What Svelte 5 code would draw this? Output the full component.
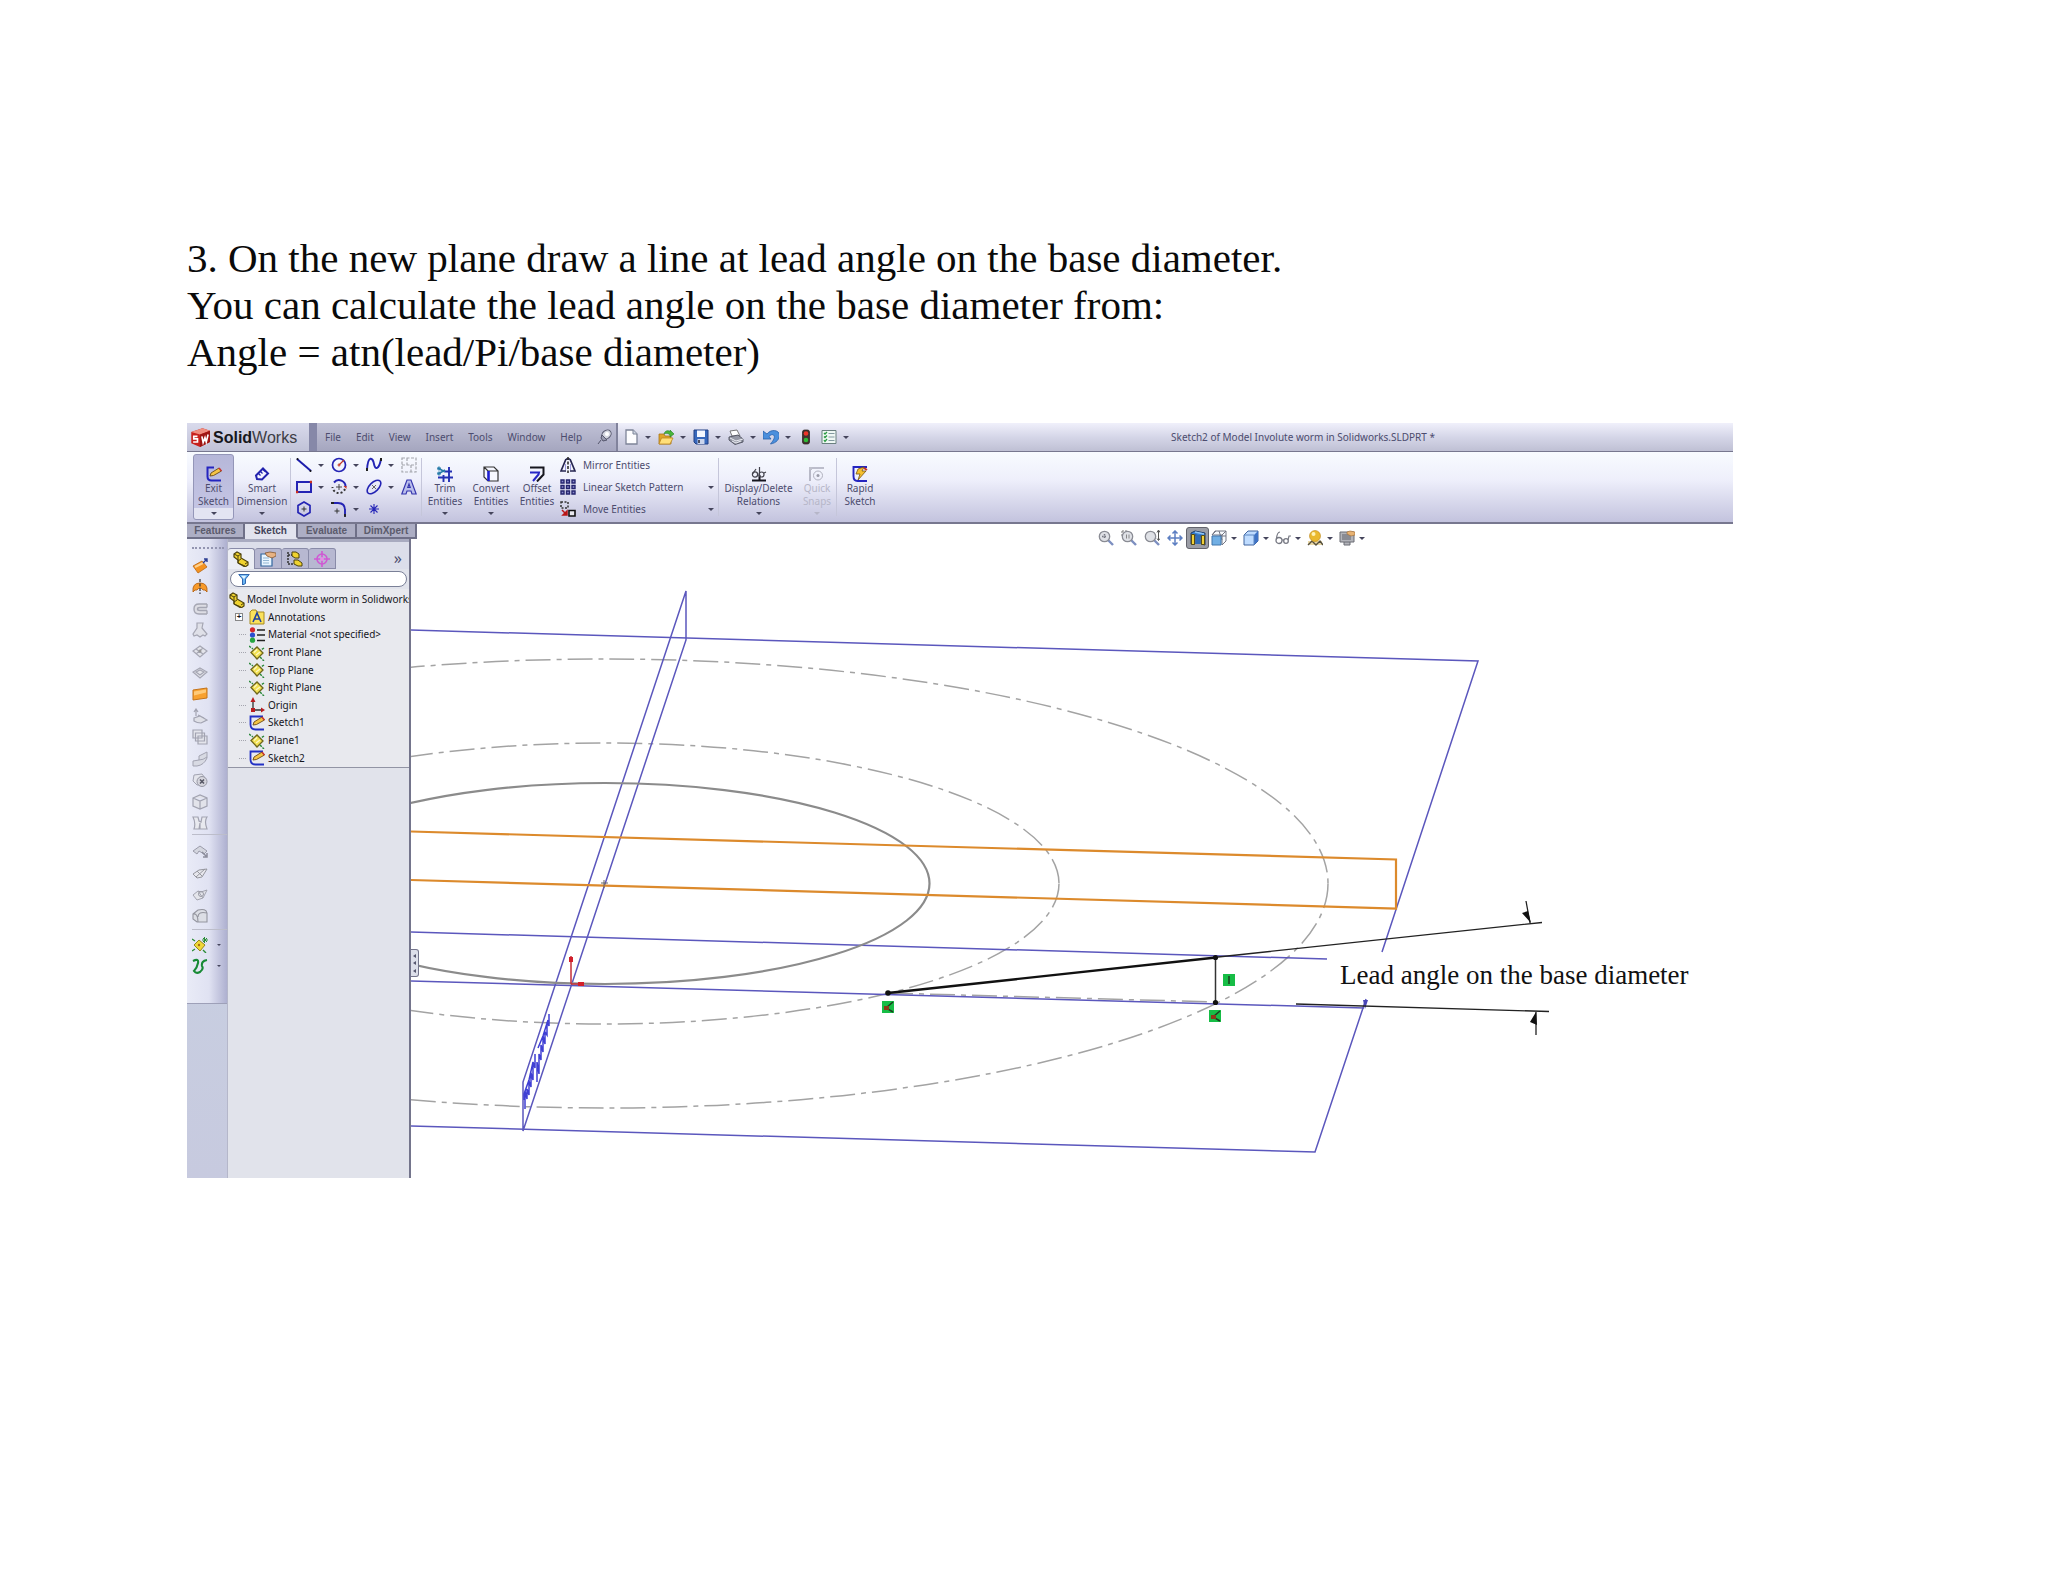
<script>
    // Instruction text above the window
    const steps = [
        '3. On the new plane draw a line at lead angle on the base diameter.',
        'You can calculate the lead angle on the base diameter from:',
        'Angle = atn(lead/Pi/base diameter)',
    ];

    const menus = ['File', 'Edit', 'View', 'Insert', 'Tools', 'Window', 'Help'];

    const quickTools = [
        { icon: 'new', label: 'New', arrow: true },
        { icon: 'open', label: 'Open', arrow: true },
        { icon: 'save', label: 'Save', arrow: true },
        { icon: 'print', label: 'Print', arrow: true },
        { icon: 'undo', label: 'Undo', arrow: true },
        { icon: 'light', label: 'Rebuild', arrow: false },
        { icon: 'options', label: 'Options', arrow: true },
    ];

    const sketchTools = [
        { icon: 'line', label: 'Line', arrow: true },
        { icon: 'circle', label: 'Circle', arrow: true },
        { icon: 'spline', label: 'Spline', arrow: true },
        { icon: 'gridOff', label: 'Plane' },
        { icon: 'rect', label: 'Rectangle', arrow: true },
        { icon: 'arc', label: 'Arc', arrow: true },
        { icon: 'ellipse', label: 'Ellipse', arrow: true },
        { icon: 'text', label: 'Text' },
        { icon: 'polygon', label: 'Polygon' },
        { icon: 'fillet', label: 'Fillet', arrow: true },
        { icon: 'point', label: 'Point' },
    ];

    const entityTools = [
        { icon: 'mirror', label: 'Mirror Entities' },
        { icon: 'pattern', label: 'Linear Sketch Pattern', arrow: true },
        { icon: 'move', label: 'Move Entities', arrow: true },
    ];

    const tabs = ['Features', 'Sketch', 'Evaluate', 'DimXpert'];
    let activeTab = $state('Sketch');

    const surfaceTools = ['extrude', 'revolve', 'sweep', 'loft', 'boundary', 'surface', 'planar', 'offsetS', 'copy', 'ruled', 'deleteF', 'cube', 'knit'];
    const trimTools = ['extend', 'trimS', 'untrim', 'filletS'];

    const panelTabs = ['part', 'property', 'config', 'target'];

    const tree = [
        { icon: 'note', label: 'Annotations', plus: true },
        { icon: 'material', label: 'Material <not specified>' },
        { icon: 'plane', label: 'Front Plane' },
        { icon: 'plane', label: 'Top Plane' },
        { icon: 'plane', label: 'Right Plane' },
        { icon: 'origin', label: 'Origin' },
        { icon: 'sketch', label: 'Sketch1' },
        { icon: 'plane', label: 'Plane1' },
        { icon: 'sketch', label: 'Sketch2' },
    ];

    const viewTools = [
        { icon: 'zoomFit', label: 'Zoom to Fit' },
        { icon: 'zoomArea', label: 'Zoom to Area' },
        { icon: 'zoomInOut', label: 'Zoom In/Out' },
        { icon: 'pan', label: 'Pan' },
        { icon: 'section', label: 'Section View', active: true },
        { icon: 'orient', label: 'View Orientation', arrow: true },
        { icon: 'display', label: 'Display Style', arrow: true },
        { icon: 'glasses', label: 'Hide/Show Items', arrow: true },
        { icon: 'scene', label: 'Apply Scene', arrow: true },
        { icon: 'settings', label: 'View Settings', arrow: true },
    ];

    // All icons are drawn on a 16x16 grid
    const lens = '<path d="M10 10l5 5" stroke="#7d8fc0" stroke-width="2.4"/><circle cx="6.5" cy="6.5" r="5.2" fill="#dfe1e6" stroke="#8a8c94" stroke-width="1.3"/>';
    const pencil = '<path d="M4 10l1-3 8-5 2.500 3-8 4.500z" fill="#f4c445" stroke="#6b4a12" stroke-width=".9"/><path d="M13 2l2.500 3" stroke="#c33" stroke-width="1.500"/>';
    const icons = {
        logo: '<path d="M1 4l9-3 6 2v9l-8 4-7-3z" fill="#c8201c"/><path d="M1 4l9-3 6 2-8 3z" fill="#ef8e80"/><path d="M8 6l8-3v9l-8 4z" fill="#9e1512"/><path d="M6 7.500H3v2h3v2.500H2.500M9.500 7.500l1 5 1.500-4 1 3.500 1.500-6" stroke="#fff" stroke-width="1.300"/>',
        pin: '<ellipse cx="9.500" cy="5.500" rx="5" ry="4" transform="rotate(-40 9.500 5.500)" fill="#d4d6e0" stroke="#55566c"/><path d="M5 6l5 5-4 1-2-3zM4 11l-3 4" fill="#999bb0" stroke="#55566c"/><circle cx="10" cy="5" r="2" fill="#fff"/>',
        new: '<path d="M3 1h7l4 4v10H3z" fill="#fdfdff" stroke="#7d8498" stroke-width="1.300"/><path d="M10 1v4h4" fill="#cfd6e4" stroke="#7d8498"/>',
        open: '<path d="M1 5h5l1 2h6v8H1z" fill="#e0a428" stroke="#a8761a" stroke-width=".8"/><path d="M3.500 9H15l-3 6H1z" fill="#ffdf79" stroke="#b98420" stroke-width=".8"/><path d="M6 5c1-4 5-4 6-2V1l4 4-4 3V6c-2-2-4-2-6-1z" fill="#49b53a" stroke="#26802a" stroke-width=".6"/>',
        save: '<path d="M1 1h14v14H3l-2-2z" fill="#3768bc" stroke="#203f84"/><path d="M4 1.500h8V8H4z" fill="#f4f7ff"/><path d="M4.500 10h7v5h-7z" fill="#cbd5ec"/><path d="M6 11v3" stroke="#223" stroke-width="1.500"/>',
        print: '<path d="M4 7l-2-5 7-1 3 6z" fill="#fff" stroke="#777"/><path d="M1 8l9-2 5 4v3l-8 2.500L1 11z" fill="#9598a5" stroke="#4c4e5c" stroke-width=".9"/><path d="M2 9l6 3 7-2M4 12l4 2 5-2" stroke="#eceef4"/>',
        undo: '<path d="M0 2v8h8L6 7.500C9 4 12.500 6 11 9.500c-.6 2-2 3.500-3.500 5.500 6-1 9-5 9-9C16 .5 7.500 0 4 5z" fill="#4a8fdd" stroke="#2660aa" stroke-width=".8"/>',
        light: '<rect x="4.500" y="1" width="7" height="14" rx="2" fill="#42322e" stroke="#271d1b" stroke-width=".7"/><circle cx="8" cy="4.500" r="2.300" fill="#ee3529"/><circle cx="8" cy="11" r="2.300" fill="#2dbb35"/>',
        options: '<path d="M1 1.500h14v13H1z" fill="#eff8f4" stroke="#69807e"/><path d="M7.500 4.500h6M7.500 8h6M7.500 11.500h6" stroke="#8299a0"/><path d="M3 4l1 1 2-2M3 7.500l1 1 2-2M3 11l1 1.500L6 10" stroke="#2b9b42" stroke-width="1.300"/>',
        exit: '<path d="M8 1.500H1.500v9q0 4 4 4H15" stroke="#2424c0" stroke-width="2"/>' + pencil,
        dimension: '<path d="M2 9.500l7-7 5 5-6 6-5-.5z" fill="#f4f4ff" stroke="#2222ae" stroke-width="2"/><path d="M4.500 7.500l2 2M6.500 5.500l2 2M9 3.500l2 2" stroke="#2222ae" stroke-width="1.200"/>',
        line: '<path d="M1 2l14 12" stroke="#1c1cac" stroke-width="2"/><circle cx="1.500" cy="2" r="1" fill="#111"/><circle cx="14.500" cy="14" r="1" fill="#111"/>',
        circle: '<circle cx="8" cy="8" r="6.500" stroke="#2424b4" stroke-width="1.700"/><path d="M8 8l5-5M6.500 8h3M8 6.500v3" stroke="#c33a28" stroke-width="1.200"/>',
        spline: '<path d="M1 13c1-16 6-12 7-6s5 6 7-5" stroke="#2424b4" stroke-width="1.900"/><path d="M1 11v3M15 1v3" stroke="#222" stroke-width="2"/>',
        gridOff: '<path d="M1 1h14v14H1zM1 8h14M6 1v7M10 8v7" stroke="#a3a5ac" stroke-width="1.200" stroke-dasharray="3 1.500"/>',
        rect: '<path d="M1 3h14v10H1z" stroke="#2424b4" stroke-width="2"/><path d="M0 12h2v2H0zM14 2h2v2h-2z" fill="#c32" stroke="#c32" stroke-width=".5"/>',
        arc: '<path d="M3 3.500A6.500 6.500 0 0 1 14.500 8" stroke="#2424b4" stroke-width="2"/><path d="M14 10A6.500 6.500 0 0 1 1.500 8" stroke="#333" stroke-width="2" stroke-dasharray="2 2"/><path d="M8 5v6M5 8h6" stroke="#444"/><path d="M12.500 7h3v3z" fill="#c32"/>',
        ellipse: '<ellipse cx="8" cy="8" rx="8.500" ry="4.500" transform="rotate(-45 8 8)" stroke="#2424b4" stroke-width="1.600"/><path d="M6 6l4 4M10 6l-4 4" stroke="#666"/>',
        text: '<path d="M.8 15L6 1h4l5.200 14h-4.200l-1-3H6l-1 3zM6.800 8.500h2.400L8 5z" fill="#b9bdec" stroke="#3535ad" stroke-width="1.200"/>',
        polygon: '<path d="M8 1l6 3.500v7L8 15l-6-3.500v-7z" stroke="#2424b4" stroke-width="1.700"/><path d="M8 5.500v5M5.500 8h5" stroke="#333"/>',
        fillet: '<path d="M1 2h6q7 0 7 7v6" stroke="#2424b4" stroke-width="1.900"/><path d="M6 7.500v5M3.500 10h5" stroke="#333"/><path d="M0 2h3M14 13v3" stroke="#222" stroke-width="1.800"/>',
        point: '<path d="M8 3v10M3 8h10M4.500 4.500l7 7M11.500 4.500l-7 7" stroke="#2626b8" stroke-width="1.100"/>',
        trim: '<path d="M1 11.500h15M12 1v15M6.500 9v7M8 5.500h7" stroke="#2430b4" stroke-width="1.900"/><path d="M1 2l7 4M1 8l7-4" stroke="#257ba8" stroke-width="1.600"/><circle cx="2" cy="2.500" r="1.500" stroke="#257ba8"/><circle cx="2" cy="7.500" r="1.500" stroke="#257ba8"/>',
        convert: '<path d="M1 1h10l4 4v10H5l-4-4zM1 1l4 4h10" fill="#f7f8ff" stroke="#333" stroke-width="1.200"/><path d="M5.500 5v10" stroke="#1d1dd0" stroke-width="2.600"/>',
        offset: '<path d="M1 1.500h13.500v7L8 15.500" stroke="#16161e" stroke-width="2"/><path d="M1 6.500h9l-.5 2L4 15" stroke="#2525c5" stroke-width="2"/>',
        mirror: '<path d="M6 2L1 14h5M10 2l5 12h-5M6 2h4" stroke="#252550" stroke-width="1.700"/><path d="M5.500 7v6M10.500 7v6" stroke="#9a9ae0"/><path d="M8 0v16" stroke="#222" stroke-width="1.500" stroke-dasharray="3 1.500"/>',
        pattern: '<path d="M1 1h3v3H1zM6.500 1h3v3h-3zM12 1h3v3h-3zM1 6.500h3v3H1zM6.500 6.500h3v3h-3zM12 6.500h3v3h-3zM1 12h3v3H1zM6.500 12h3v3h-3zM12 12h3v3h-3z" fill="#8a8ace" stroke="#25256e" stroke-width="1.400"/>',
        move: '<path d="M1 1h7v6H1z" stroke="#333" stroke-width="1.500" stroke-dasharray="2 1.500"/><path d="M2 9l4 4M7 10v4H3z" fill="#b91616" stroke="#b91616" stroke-width="1.500"/><path d="M9 9.500h6V15H9z" fill="#e8e8ee" stroke="#111" stroke-width="1.600"/>',
        relations: '<path d="M1 14.500h14M8.500 9v5" stroke="#15151e" stroke-width="2"/><circle cx="4" cy="8.500" r="2.600" stroke="#42424c" stroke-width="1.200"/><circle cx="10.500" cy="8.500" r="2.500" stroke="#42424c" stroke-width="1.200"/><path d="M1.500 8L5 3M8.500 1v9M13 7l2-1" stroke="#42424c" stroke-width="1.200"/>',
        snaps: '<path d="M1 15V2h14" stroke="#aaabba" stroke-width="1.600"/><circle cx="9" cy="9.500" r="4.500" stroke="#b0b1be"/><circle cx="9" cy="9.500" r="1.500" fill="#9a9ba8"/><path d="M0 1h3v3H0z" fill="#c0c1cc"/>',
        rapid: '<path d="M15 1H1.500v9q0 5 4 5H15" stroke="#2424c0" stroke-width="1.900"/><path d="M6 3l6-2-2 4h4L6 14l2-6H4z" fill="#f5bf2c" stroke="#755317" stroke-width=".8"/><path d="M12 2l3 2" stroke="#c32" stroke-width="2"/>',
        extrude: '<path d="M1 8l9-5 5 6-9 6z" fill="#f4921f" stroke="#b96613" stroke-width=".8"/><path d="M3 9l8-4" stroke="#ffd28f" stroke-width="2"/><path d="M11 5l4-4M12 1h3v3" stroke="#2c3e93" stroke-width="1.400"/>',
        revolve: '<path d="M1 13Q0 4 8 4t7 9q-2-3-4-2-1-2-3-2t-3 2q-2-1-4 2z" fill="#f79a2a" stroke="#b7610e" stroke-width=".9"/><path d="M8 0v15" stroke="#333" stroke-dasharray="3 1.500" stroke-width="1.200"/>',
        sweep: '<path d="M15 3H7Q2 3 2 8t5 5h8M15 6.500H8q-2.500 0-2.500 1.500T8 9.500h7M15 3v3.500M15 9.500V13" fill="#dddde4" stroke="#a5a6b3" stroke-width="1.400"/>',
        loft: '<path d="M5 1h6l-1 5 5 6-2 2-2-1-3 2-3-2-3 1-1-2 4-6z" fill="#dfe0e8" stroke="#a5a6b3" stroke-width="1.200"/>',
        boundary: '<path d="M8 2l7 5-7 6-7-6zM4 5l7 5M11 4L4 10" fill="#e3e4ea" stroke="#a5a6b3" stroke-width="1.200"/><circle cx="8" cy="7" r="1.500" fill="#999"/>',
        surface: '<path d="M8 3l7 4-7 6-7-6zM4 7l4-2 4 2-4 3z" fill="#e3e4ea" stroke="#a5a6b3" stroke-width="1.200"/>',
        planar: '<path d="M1 4l14-2v10L1 14z" fill="#f8a12f" stroke="#c4741b"/><path d="M2 5.500l12-2v3l-12 3z" fill="#ffca78"/>',
        offsetS: '<path d="M2 10l6-2 7 4-6 3q-4 0-7-2zM4 8V2M2 4l2-3 2 3M6 7l6 3" fill="#dfe0e7" stroke="#a2a3b1" stroke-width="1.200"/>',
        copy: '<path d="M1 1h9v8H1zM3.500 4h9v8h-9zM6 7h9v8H6z" fill="#e4e5ec" stroke="#a2a3b1" stroke-width="1.200"/>',
        ruled: '<path d="M15 1v6q-3 7-10 8H1v-5l6-1V5l8-4zM7 9q4 0 8-3" fill="#d8dae3" stroke="#a2a3b1"/>',
        deleteF: '<path d="M2 3l8-1 3 4-3 7H5L1 9z" fill="#e4e5ec" stroke="#a2a3b1"/><circle cx="10" cy="9.500" r="5" fill="#d5d5dd" stroke="#9697a4"/><path d="M8 7.500l4 4M12 7.500l-4 4" stroke="#565765" stroke-width="1.600"/>',
        cube: '<path d="M1 4l7-3 7 3v8l-7 3-7-3zM1 4l7 3 7-3M8 7v8" fill="#e2e3ea" stroke="#a2a3b1" stroke-width="1.200"/>',
        knit: '<path d="M1 2h5l1 4 2 1 1-5h5q-3 4 0 12H8V8l-1 6H2q2-6-1-12z" fill="#e8e9ef" stroke="#a2a3b1" stroke-width="1.200"/>',
        extend: '<path d="M1 8l7-5 7 5-3 3-5-3-2 3z" fill="#d4d6df" stroke="#9b9caa"/><path d="M10 9l5 5M15 10v4h-4" stroke="#8c8d9c" stroke-width="1.500"/>',
        trimS: '<path d="M1 9l6-4 8-1-5 8-5 1zM4 12l9-8M5 6l5 5" fill="#e7e7ed" stroke="#96979f"/>',
        untrim: '<path d="M1 9l5-4 3 1 6-2-4 8-6 2zM6 5l5 7" fill="#e4e5eb" stroke="#a3a4af"/><circle cx="9" cy="8" r="2.500" stroke="#999aa5"/>',
        filletS: '<path d="M1 6l5-4q8-2 9 3v9H5l-4-3zM1 6q5-1 5 8M6 9q0-6 9-4" fill="#dcdee5" stroke="#94959f" stroke-width="1.100"/>',
        refGeo: '<path d="M2 8l5-5 6 5-5 6z" fill="#f0d838" stroke="#97851e"/><path d="M0 2l3 2M11 13l3 3M0 14l3-2" stroke="#2c8d38" stroke-width="1.400"/><path d="M12.500 0v6M10 3h6M11 1l4 4M15 1l-4 4" stroke="#2c8d38"/><circle cx="7" cy="8" r="1.200" fill="#ad6f12"/>',
        curve: '<path d="M1 3q6-3 5 2T2 13q2 3 6 1 4-3 2-6-1-5 5-6" stroke="#178a35" stroke-width="2.100"/>',
        part: '<path d="M1 3l3-2 4 2v4l7 4v3l-3 2-7-4V9L1 6z" fill="#efd22f" stroke="#4e430d" stroke-width="1.200"/><path d="M1 3l4 2 3-2M5 5v7l7 3M8 8l-3 2M15 11l-3 2" stroke="#4e430d"/>',
        property: '<path d="M1 3h11v12H1z" fill="#e8f5ff" stroke="#33679e" stroke-width="1.200"/><path d="M3 7h6M3 9.500h6M3 12h6" stroke="#93b6d2"/><path d="M5 2l5-1 6 1v3l-4 2-5-2z" fill="#e7b283" stroke="#84552f" stroke-width=".8"/>',
        config: '<path d="M5 1h4l3 2v4H8L5 5z" fill="#efd22f" stroke="#4e430d"/><path d="M7 9h4l4 3v3h-4l-4-2z" fill="#efd22f" stroke="#4e430d"/><path d="M1 1v12h5M1 4h4" stroke="#333" stroke-width="1.500" stroke-dasharray="2 1"/>',
        target: '<circle cx="8" cy="8" r="5" stroke="#cf59d3" stroke-width="1.600"/><path d="M8 0v16M0 8h16" stroke="#cf59d3" stroke-width="1.600"/><circle cx="8" cy="8" r="2" fill="#e48de6"/>',
        funnel: '<path d="M1 2h14l-5 6v6l-4 2V8z" fill="#68b4f2" stroke="#2159a6" stroke-width="1.200"/><path d="M4 3.500h7L8 8z" fill="#e6f5ff"/>',
        note: '<path d="M1 3l2-2h4l1 2h7v12H1z" fill="#fae15b" stroke="#a78a21"/><path d="M4 13l4-9 4 9M5.500 10h5" stroke="#20409e" stroke-width="1.600"/>',
        material: '<path d="M8 3h8M8 8h8M8 13.500h8" stroke="#222" stroke-width="1.500"/><circle cx="3.500" cy="2.800" r="2.600" fill="#d4282a"/><circle cx="3.500" cy="8" r="2.600" fill="#2b4ed0"/><circle cx="3.500" cy="13.200" r="2.600" fill="#26a540"/>',
        plane: '<path d="M2 7.500l6-5.500 6 6-6 6z" fill="#f2e052" stroke="#6f661c" stroke-width="1.300"/><path d="M5 7.500l3-3M7 10l4-3" stroke="#fdf8c0" stroke-width="1.300"/><path d="M0 1l4 3M11 12l4 4M15 3l-3 2" stroke="#29883a" stroke-width="1.400" stroke-dasharray="2.500 1"/>',
        origin: '<path d="M4 2v11h10" stroke="#333" stroke-width="1.300"/><path d="M1.500 5L4 0l2.500 5zM12 10.500l4 2.500-4 2.500zM2 11h4v4H2z" fill="#b91d20"/>',
        sketch: '<path d="M14 1.500H1.500v8q0 5 5 5H15" stroke="#2230c4" stroke-width="1.800"/>' + pencil,
        zoomFit: lens + '<path d="M4 6.500h5M6.500 4v5" stroke="#777983" stroke-dasharray="1.500 1" stroke-width="1.500"/>',
        zoomArea: '<path d="M1 1h6v3M1 1v6" stroke="#777" stroke-dasharray="2 1"/>' + lens + '<path d="M5.500 4.500v4M8 4.500v4" stroke="#888"/>',
        zoomInOut: lens + '<path d="M14.500 1v9M13 2.500L14.500 0 16 2.500M13 8.500l1.500 2 1.500-2" stroke="#555"/>',
        pan: '<path d="M8 1v14M1 8h14M5.500 3.500L8 1l2.500 2.500M5.500 12.500L8 15l2.500-2.500M3.500 5.500L1 8l2.500 2.500M12.500 5.500L15 8l-2.500 2.500" stroke="#5d7fc2" stroke-width="1.500"/>',
        section: '<path d="M1 3l4-2 10 2v12l-4-1V6L5 5v9H1z" fill="#387fd0" stroke="#1e3c66"/><path d="M1.500 4.500h3v10h-3zM11.500 5.500h3v9h-3z" fill="#f0d13b" stroke="#564a13"/><path d="M5.500 5h5v9h-5z" fill="#2f6cb8"/><path d="M5 2l9 2" stroke="#8fc4f5" stroke-width="1.500"/>',
        orient: '<path d="M4 1h11v10l-4 4V5H1zM1 5L5 1M8 1l3 9M15 1L8 8M15 6H8" fill="#f7fafd" stroke="#737683"/><path d="M1 6h9v9H1z" fill="#71afe4" stroke="#4377ac"/>',
        display: '<path d="M1 5l4-4h10v10l-4 4H1z" fill="#bfdcff" stroke="#41649e"/><path d="M11 5l4-4v10l-4 4z" fill="#3f73c6"/><path d="M1 5h10v10" stroke="#5d87c2"/>',
        glasses: '<circle cx="4" cy="10.500" r="3" stroke="#777983" stroke-width="1.300"/><circle cx="11" cy="11" r="2.300" stroke="#777983" stroke-width="1.300"/><path d="M1.500 9Q2 2 5 2M7 10h2M13 10l1-4h2" stroke="#777983" stroke-width="1.200"/>',
        scene: '<path d="M1 11h14v4H1z" fill="#ecdaa8"/><path d="M1 15l4-4 4 4 4-4 3 4" stroke="#55503e" stroke-width="1.400"/><circle cx="8" cy="6" r="5.500" fill="#eab92e" stroke="#bd8719" stroke-width=".6"/><circle cx="6.500" cy="4" r="2" fill="#fff3b5"/>',
        settings: '<path d="M1 2h14v10H1zM5 12v3h6v-3" fill="#b3b4ba" stroke="#6b6c75"/><path d="M3 4h9v6H3z" fill="#898b93"/><path d="M8 2l3-1 5 1v3l-4 1-4-2z" fill="#e8b373" stroke="#9f682f" stroke-width=".6"/>',
    };
</script>

{#snippet icon(name)}
    <svg class="icon" viewBox="0 0 16 16" fill="none" aria-hidden="true">{@html icons[name]}</svg>
{/snippet}

{#snippet bigTool(name, first, second, arrow, kind)}
    <button class="big {kind}">
        {@render icon(name)}
        <span>{first}</span>
        <span>{second}</span>
        {#if arrow}<i class="arrow"></i>{/if}
    </button>
{/snippet}

<main>
    <div class="steps">
        {#each steps as step}
            <p>{step}</p>
        {/each}
    </div>

    <div class="window">
        <header>
            <div class="brand">
                {@render icon('logo')}
                <span><b>Solid</b>Works</span>
            </div>
            <nav>
                {#each menus as menu}
                    <button>{menu}</button>
                {/each}
                {@render icon('pin')}
            </nav>
            <div class="quick">
                {#each quickTools as tool}
                    <button class:narrow={!tool.arrow} aria-label={tool.label}>
                        {@render icon(tool.icon)}
                        {#if tool.arrow}<i class="arrow"></i>{/if}
                    </button>
                {/each}
            </div>
            <div class="title">Sketch2 of Model Involute worm in Solidworks.SLDPRT *</div>
        </header>

        <div class="ribbon">
            {@render bigTool('exit', 'Exit', 'Sketch', true, 'pressed')}
            {@render bigTool('dimension', 'Smart', 'Dimension', true, 'wide')}
            <div class="line"></div>
            <div class="sketch-tools">
                {#each sketchTools as tool}
                    <button aria-label={tool.label}>
                        {@render icon(tool.icon)}
                        {#if tool.arrow}<i class="arrow"></i>{/if}
                    </button>
                {/each}
            </div>
            <div class="line"></div>
            {@render bigTool('trim', 'Trim', 'Entities', true, '')}
            {@render bigTool('convert', 'Convert', 'Entities', true, '')}
            {@render bigTool('offset', 'Offset', 'Entities', false, '')}
            <div class="entity-tools">
                {#each entityTools as tool}
                    <button>
                        {@render icon(tool.icon)}
                        <span>{tool.label}</span>
                        {#if tool.arrow}<i class="arrow"></i>{/if}
                    </button>
                {/each}
            </div>
            <div class="line"></div>
            {@render bigTool('relations', 'Display/Delete', 'Relations', true, 'wider')}
            {@render bigTool('snaps', 'Quick', 'Snaps', true, 'off')}
            <div class="line"></div>
            {@render bigTool('rapid', 'Rapid', 'Sketch', false, '')}
        </div>

        <div class="work">
            <aside>
                <div class="tabs">
                    {#each tabs as tab}
                        <button class:active={tab === activeTab} onclick={() => (activeTab = tab)}>{tab}</button>
                    {/each}
                </div>
                <div class="panels">
                    <div class="strip">
                        <div class="strip-tools">
                            <div class="grip"></div>
                            <div class="group surfaces">
                                {#each surfaceTools as name}
                                    <button aria-label={name}>{@render icon(name)}</button>
                                {/each}
                            </div>
                            <div class="group trims">
                                {#each trimTools as name}
                                    <button aria-label={name}>{@render icon(name)}</button>
                                {/each}
                            </div>
                            <div class="group curves">
                                <button aria-label="Reference Geometry">{@render icon('refGeo')}<i class="arrow small"></i></button>
                                <button aria-label="Curves">{@render icon('curve')}<i class="arrow small"></i></button>
                            </div>
                        </div>
                    </div>
                    <div class="manager">
                        <div class="panel-tabs">
                            {#each panelTabs as name, i}
                                <button class:active={i === 0} aria-label={name}>{@render icon(name)}</button>
                            {/each}
                            <span class="more">»</span>
                        </div>
                        <label class="filter">
                            {@render icon('funnel')}
                            <input type="text" aria-label="Filter" />
                        </label>
                        <div class="tree">
                            <div class="root">{@render icon('part')}<span>Model Involute worm in Solidworks</span></div>
                            {#each tree as item}
                                <div class="node">
                                    <i class="branch" class:plus={item.plus}>{item.plus ? '+' : ''}</i>
                                    {@render icon(item.icon)}
                                    <span>{item.label}</span>
                                </div>
                            {/each}
                        </div>
                    </div>
                </div>
            </aside>

            <div class="canvas">
                <svg class="drawing" viewBox="411 524 1322 654" fill="none">
                    <!-- construction circles -->
                    <g stroke="#a3a3a3" stroke-width="1.500" stroke-dasharray="25 6 5 6">
                        <ellipse cx="605" cy="883.500" rx="723" ry="224.500" />
                        <ellipse cx="605" cy="883.500" rx="454" ry="140.500" />
                        <path d="M888 993L1215 1002" />
                    </g>
                    <!-- planes -->
                    <g stroke="#5b57bd" stroke-width="1.500">
                        <path d="M411 630L1478 661L1382 952M1366 999L1315 1152L411 1126" />
                        <path d="M411 932L1327 959M411 981L1364 1008" />
                        <path d="M686 591V640L523 1131V1082Z" />
                    </g>
                    <path d="M1363 1000h5l-3 9z" fill="#4a46b8" />
                    <ellipse cx="605" cy="883.500" rx="324.500" ry="100.500" stroke="#8b8b8b" stroke-width="2.200" />
                    <path d="M411 831.500L1396 859.500V908.500L411 880" stroke="#dc8a2c" stroke-width="2.200" />
                    <path d="M604 880v8M601 883h7" stroke="#666" />
                    <!-- plane label seen edge-on -->
                    <path
                        d="M549 1014v12l-2-4v13l-2-3v12l-2-8v16l-2-7v15l-2-6v20l-2-12v20M548 1020l-5 16-5 12M535 1054v14l-2-6v18l-2-7v14l-2-6v14l-2-6v10l-2-8v18M533 1062l-4 18-5 14v6"
                        stroke="#3f3fd4"
                        stroke-width="1.500"
                    />
                    <!-- origin -->
                    <path d="M571 984V956M571 984H583" stroke="#c52f38" stroke-width="1.500" />
                    <path d="M569 957h4v5h-4zM578 982h6v4h-6z" fill="#d21f2b" />
                    <!-- lead line -->
                    <path d="M888 993L1216 957.500" stroke="#111" stroke-width="2.400" />
                    <path d="M1215.500 957V1003" stroke="#333" stroke-width="1.500" />
                    <circle cx="888" cy="993" r="2.800" fill="#111" />
                    <circle cx="1215.500" cy="957.500" r="2.600" fill="#111" />
                    <circle cx="1215.500" cy="1002.500" r="2.600" fill="#111" />
                    <!-- relation markers -->
                    <path d="M882 1001h12v12h-12zM1223 974h12v12h-12zM1209 1010h12v12h-12z" fill="#17bd46" />
                    <path d="M893 1002l-7 6 7 4M1220 1011l-7 6 7 4M1229 976v8" stroke="#1d3d1f" stroke-width="1.500" />
                    <path d="M884 1006h5v4h-5zM1211 1015h5v4h-5z" fill="#8b3a1a" />
                    <!-- angle dimension -->
                    <path d="M1218 957L1542 922.500M1296 1004L1549 1011.500M1526 901L1530 923M1536 1012V1035" stroke="#222" stroke-width="1.300" />
                    <path d="M1522 913l6-2 3 12zM1536 1012l1 13-7-3z" fill="#111" />
                    <text x="1340" y="984">Lead angle on the base diameter</text>
                </svg>
                <div class="view-tools">
                    {#each viewTools as tool}
                        <button class:active={tool.active} class:drop={tool.arrow} aria-label={tool.label}>
                            {@render icon(tool.icon)}
                            {#if tool.arrow}<i class="arrow"></i>{/if}
                        </button>
                    {/each}
                </div>
                <div class="handle"><i></i><i></i><i></i></div>
            </div>
        </div>
    </div>
</main>

<style>
    :global(body) {
        margin: 0;
        background: #fff;
    }

    main {
        padding: 235px 315px 0 187px;
    }

    .steps {
        font-family: 'Liberation Serif', 'Times New Roman', serif;
        font-size: 41px;
        color: #0a0a0a;
        margin-bottom: 47px;
    }

    .steps p {
        margin: 0;
        line-height: 47px;
    }

    .window {
        font-family: 'Noto Sans', sans-serif;
        font-size: 10px;
        line-height: 13px;
        color: #4c4c6e;
    }

    button {
        display: flex;
        align-items: center;
        padding: 0;
        border: none;
        background: none;
        font: inherit;
        color: inherit;
        white-space: nowrap;
    }

    .icon {
        display: block;
        flex: none;
        width: 16px;
        height: 16px;
    }

    .arrow {
        flex: none;
        border: 3px solid transparent;
        border-top-color: #45455c;
        border-bottom: none;
    }

    .arrow.small {
        border-width: 2px;
        border-bottom: none;
    }

    header {
        display: flex;
        align-items: center;
        height: 28px;
        background: linear-gradient(#f0f0fb, #d5d6e8 50%, #bfc0d4);
        border-bottom: 1px solid #77778f;
    }

    .brand {
        display: flex;
        align-items: center;
        align-self: stretch;
        gap: 3px;
        box-sizing: border-box;
        width: 130px;
        padding-left: 3px;
        border-right: 8px solid #8688a8;
        background: linear-gradient(#d9daec, #c0c2d7);
        font-family: 'Liberation Sans', Arial, sans-serif;
        font-size: 16px;
        color: #3c3c44;
    }

    .brand b {
        color: #17171c;
    }

    .brand .icon {
        width: 20px;
        height: 20px;
    }

    nav {
        display: flex;
        align-items: center;
        align-self: stretch;
        justify-content: space-between;
        box-sizing: border-box;
        width: 301px;
        padding: 0 3px 0 8px;
        border-right: 2px solid #81839c;
        background: linear-gradient(#c0c1d6, #a5a6bf);
    }

    .quick {
        display: flex;
        margin-left: 5px;
    }

    .quick button {
        gap: 6px;
        width: 35px;
    }

    .quick .narrow {
        width: 23px;
    }

    .title {
        flex: 1;
        padding-left: 17px;
        text-align: center;
    }

    .ribbon {
        display: flex;
        box-sizing: border-box;
        height: 72px;
        padding: 2px 6px;
        background: linear-gradient(#f8fbff, #eeeffb 40%, #c3c3de);
        border-bottom: 2px solid #77778f;
    }

    .line {
        width: 1px;
        margin: 4px 0;
        background: #c5c6da;
    }

    .big {
        flex-direction: column;
        box-sizing: border-box;
        width: 46px;
        padding-top: 12px;
    }

    .big .arrow {
        margin-top: 4px;
    }

    .big.pressed {
        width: 41px;
        padding-top: 11px;
        border: 1px solid #9496b8;
        border-radius: 3px;
        background: linear-gradient(#b6b7d9 0, #c4c5e4 53px, #e3e4f2 53px);
    }

    .big.wide {
        width: 56px;
    }

    .big.wider {
        width: 79px;
    }

    .big.off {
        width: 38px;
        color: #b6b6c8;
    }

    .big.off .arrow {
        border-top-color: #b6b6c8;
    }

    .sketch-tools {
        display: grid;
        grid-template-columns: 35px 35px 35px 20px;
        grid-template-rows: repeat(3, 1fr);
        padding-left: 5px;
    }

    .sketch-tools button {
        gap: 6px;
    }

    .entity-tools {
        display: grid;
        grid-template-rows: repeat(3, 1fr);
        width: 158px;
    }

    .entity-tools button {
        gap: 7px;
        padding-right: 4px;
    }

    .entity-tools .arrow {
        margin-left: auto;
    }

    .work {
        display: flex;
    }

    aside {
        display: flex;
        flex-direction: column;
        flex: none;
        width: 224px;
    }

    .tabs {
        display: grid;
        grid-template-columns: 58px 53px 59px 60px;
        position: relative;
        z-index: 1;
        width: 230px;
        font: bold 10px/12px 'Liberation Sans', Arial, sans-serif;
        color: #5b5b6c;
    }

    .tabs button {
        justify-content: center;
        height: 15px;
        border: 1px solid #6f7088;
        border-width: 0 2px 2px 0;
        background: #adaec4;
    }

    .tabs .active {
        border-bottom-color: #e2e3ee;
        background: #e2e3ee;
        color: #44445a;
    }

    .panels {
        display: flex;
        flex: 1;
    }

    .strip {
        box-sizing: border-box;
        width: 41px;
        border-right: 1px solid #b5b7ca;
        background: linear-gradient(#d2d3e6, #c8cfe1 60%, #c7cadf);
    }

    .strip-tools {
        box-sizing: border-box;
        height: 465px;
        padding: 8px 0 0 5px;
        border-bottom: 1px solid #9ea0b8;
        background: linear-gradient(90deg, #e9ebf7, #e0e2f2 55%, #aeb0d0);
    }

    .grip {
        width: 32px;
        margin-bottom: 6px;
        border-top: 2px dotted #9395b1;
    }

    .group {
        display: grid;
        grid-auto-rows: 1fr;
        box-sizing: border-box;
    }

    .group button {
        gap: 9px;
    }

    .surfaces {
        height: 279px;
    }

    .trims {
        height: 95px;
        padding: 5px 0 2px;
    }

    .curves {
        height: 47px;
        padding-top: 4px;
    }

    .group + .group {
        border-top: 1px solid #bcbdca;
    }

    .manager {
        flex: 1;
        min-width: 0;
        border-right: 2px solid #74758c;
        background: #e1e3eb;
    }

    .panel-tabs {
        display: flex;
        align-items: flex-end;
        box-sizing: border-box;
        height: 30px;
        border-top: 3px solid #a9abc0;
        background: #dcdeea;
        padding-right: 5px;
    }

    .panel-tabs button {
        justify-content: center;
        box-sizing: border-box;
        width: 27px;
        height: 21px;
        border: 1px solid #898ba8;
        border-left: none;
        border-radius: 3px 3px 0 0;
        background: #b7b8d1;
    }

    .panel-tabs .active {
        border-bottom: none;
        background: #eceef4;
    }

    .more {
        margin: 0 2px 4px auto;
        font-size: 16px;
    }

    .filter {
        display: flex;
        align-items: center;
        height: 14px;
        margin: 2px;
        padding-left: 7px;
        border: 1px solid #7a8097;
        border-radius: 8px;
        background: #fff;
    }

    .filter .icon {
        width: 12px;
        height: 12px;
    }

    .filter input {
        flex: 1;
        min-width: 0;
        height: 12px;
        padding: 0 4px;
        border: none;
        outline: none;
        background: none;
        font: inherit;
    }

    .tree {
        display: grid;
        grid-auto-rows: 1fr;
        height: 176px;
        padding-top: 2px;
        overflow: hidden;
        border-bottom: 1px solid #9294a4;
        background: #e8e9ee;
        color: #15151c;
    }

    .root,
    .node {
        display: flex;
        align-items: center;
        gap: 3px;
        white-space: nowrap;
    }

    .root {
        gap: 2px;
        padding-left: 1px;
    }

    .node {
        padding-left: 11px;
    }

    .branch {
        box-sizing: border-box;
        width: 7px;
        border-top: 1px dotted #a4a5ae;
    }

    .branch.plus {
        width: 8px;
        height: 8px;
        margin-left: -4px;
        margin-right: 3px;
        border: 1px solid #888;
        background: #fff;
        font: bold 8px/6px 'Liberation Sans', sans-serif;
        text-align: center;
    }

    .canvas {
        position: relative;
        flex: 1;
        min-width: 0;
        background: #fff;
    }

    .drawing {
        display: block;
        width: 100%;
    }

    .drawing text {
        font-family: 'Liberation Serif', 'Times New Roman', serif;
        font-size: 27px;
        fill: #111;
    }

    /* toolbar floating over the drawing */
    .view-tools {
        position: absolute;
        top: 3px;
        left: calc(50% + 22px);
        display: flex;
        align-items: center;
    }

    .view-tools button {
        justify-content: center;
        box-sizing: border-box;
        width: 23px;
        height: 22px;
    }

    .view-tools .drop {
        justify-content: flex-start;
        gap: 4px;
        width: 32px;
        padding-left: 2px;
    }

    .view-tools .active {
        border: 1px solid #62636c;
        border-radius: 3px;
        background: #9b9da6;
    }

    /* splitter handle over the edge of the drawing */
    .handle {
        position: absolute;
        top: 65%;
        left: 0;
        display: flex;
        flex-direction: column;
        justify-content: space-evenly;
        align-items: center;
        box-sizing: border-box;
        width: 8px;
        height: 28px;
        border: 1px solid #74758c;
        border-left: none;
        border-radius: 0 3px 3px 0;
        background: #dddfea;
    }

    .handle i {
        border: 2px solid transparent;
        border-left: none;
        border-right: 3px solid #55566e;
    }
</style>
